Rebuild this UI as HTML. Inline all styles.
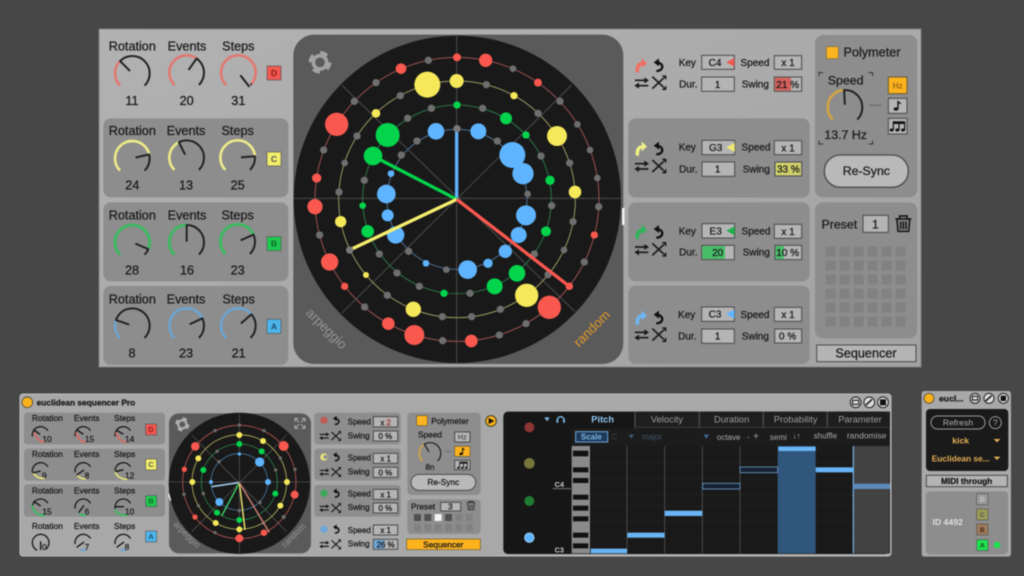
<!DOCTYPE html>
<html><head><meta charset="utf-8"><style>
html,body{margin:0;padding:0;background:#474747;width:1024px;height:576px;overflow:hidden}
svg{display:block;filter:blur(.45px)}
text{font-family:"Liberation Sans",sans-serif;fill:#1c1c1c;text-anchor:middle}
text:not([style]):not([stroke]){stroke:#1c1c1c;stroke-width:.8}
.b{stroke:#4a4a4a;stroke-width:3;fill:#b4b4b4}
.l{text-anchor:start}
.g{fill:#6e6e6e}
.r{fill:#f9584f}.y{fill:#f5e95a}.n{fill:#04d44c}.u{fill:#5fb4ff}
</style></head><body>
<svg width="1024" height="576" viewBox="0 0 1024 576" xmlns="http://www.w3.org/2000/svg">
<defs>
<linearGradient id="pg" x1="0" y1="0" x2="1" y2="1"><stop offset="0" stop-color="#b2b2b2"/><stop offset="1" stop-color="#a2a2a2"/></linearGradient>
<circle id="k" r="52" fill="none" stroke="#222" stroke-width="6" pathLength="360" stroke-dasharray="270 90" transform="rotate(135)"/>
<circle id="ks" r="25" fill="none" stroke="#1c1c1c" stroke-width="4" pathLength="360" stroke-dasharray="160 200" transform="rotate(170)"/>
<g id="back" fill="none" stroke="#111"><path d="M-8 18C14 18 16-4 -4-8" stroke-width="7"/><path d="M-16-8L0-20V4Z" fill="#111" stroke="none"/></g>
<g id="swap" fill="none" stroke="#1a1a1a" stroke-width="5"><path d="M-20-7H12M20 9H-12"/><path d="M8-16L22-7L8 2ZM-8 0L-22 9L-8 18Z" fill="#1a1a1a" stroke="none"/></g>
<g id="shuf" fill="none" stroke="#1a1a1a" stroke-width="5"><path d="M-20-18L14 14M-20 18L14-14"/><path d="M8-22L22-22L22-8ZM8 22L22 22L22 8Z" fill="#1a1a1a" stroke="none"/></g>
<g id="gear" fill="none"><circle r="20" stroke-width="11"/><circle r="29" stroke-width="10" pathLength="64" stroke-dasharray="8 8"/></g>
<g id="note1"><ellipse cx="-5" cy="10" rx="7" ry="5" fill="#111"/><path d="M1 10V-12L9-6" fill="none" stroke="#111" stroke-width="4"/></g>
<g id="note3"><ellipse cx="-17" cy="12" rx="6" ry="4.5" fill="#111"/><ellipse cx="0" cy="12" rx="6" ry="4.5" fill="#111"/><ellipse cx="17" cy="12" rx="6" ry="4.5" fill="#111"/><path d="M-12 12V-12H22V12M5 12V-12" fill="none" stroke="#111" stroke-width="3.5"/><path d="M-12-14H22V-6H-12Z" fill="#111"/></g>
</defs>

<!-- MAIN DEVICE -->
<rect x="99" y="29" width="822" height="338" fill="url(#pg)"/>
<rect x="99" y="29" width="822" height="338" fill="none" stroke="#7e7e7e" stroke-width="1"/>

<g transform="translate(95 25) scale(.33333)">
<rect x="25" y="280" width="555" height="237" rx="22" fill="#8d8d8d"/>
<rect x="25" y="532" width="555" height="237" rx="22" fill="#8d8d8d"/>
<rect x="25" y="783" width="555" height="237" rx="22" fill="#8d8d8d"/>
<g font-size="38">
<text x="112" y="76">Rotation</text><text x="276" y="76">Events</text><text x="430" y="76">Steps</text>
<text x="111" y="240">11</text><text x="275" y="240">20</text><text x="430" y="240">31</text>
<text x="112" y="330">Rotation</text><text x="273" y="330">Events</text><text x="428" y="330">Steps</text>
<text x="112" y="494">24</text><text x="273" y="494">13</text><text x="428" y="494">25</text>
<text x="112" y="584">Rotation</text><text x="276" y="584">Events</text><text x="428" y="584">Steps</text>
<text x="111" y="748">28</text><text x="276" y="748">16</text><text x="428" y="748">23</text>
<text x="112" y="835">Rotation</text><text x="273" y="835">Events</text><text x="431" y="835">Steps</text>
<text x="111" y="998">8</text><text x="273" y="998">23</text><text x="431" y="998">21</text>
</g>
<g fill="none" stroke-width="8">
<g transform="translate(112 145)"><use href="#k"/><circle r="52" stroke="#e07a72" pathLength="360" stroke-dasharray="90 360" transform="rotate(135)"/><path d="M0-10V-54" stroke="#222" stroke-width="6" transform="rotate(-45)"/></g>
<g transform="translate(275 143)"><use href="#k"/><circle r="52" stroke="#e07a72" pathLength="360" stroke-dasharray="170 360" transform="rotate(135)"/><path d="M0-10V-54" stroke="#222" stroke-width="6" transform="rotate(35)"/></g>
<g transform="translate(430 143)"><use href="#k"/><circle r="52" stroke="#e07a72" pathLength="360" stroke-dasharray="265 360" transform="rotate(135)"/><path d="M0-10V-54" stroke="#222" stroke-width="6" transform="rotate(142)"/></g>
<g transform="translate(112 400)"><use href="#k"/><circle r="52" stroke="#ecea8a" pathLength="360" stroke-dasharray="212 360" transform="rotate(135)"/><path d="M0-10V-54" stroke="#222" stroke-width="6" transform="rotate(77)"/></g>
<g transform="translate(275 398)"><use href="#k"/><circle r="52" stroke="#ecea8a" pathLength="360" stroke-dasharray="108 360" transform="rotate(135)"/><path d="M0-10V-54" stroke="#222" stroke-width="6" transform="rotate(-27)"/></g>
<g transform="translate(428 398)"><use href="#k"/><circle r="52" stroke="#ecea8a" pathLength="360" stroke-dasharray="220 360" transform="rotate(135)"/><path d="M0-10V-54" stroke="#222" stroke-width="6" transform="rotate(85)"/></g>
<g transform="translate(112 652)"><use href="#k"/><circle r="52" stroke="#3fb862" pathLength="360" stroke-width="9" stroke-dasharray="248 360" transform="rotate(135)"/><path d="M0-10V-54" stroke="#222" stroke-width="6" transform="rotate(113)"/></g>
<g transform="translate(275 652)"><use href="#k"/><circle r="52" stroke="#3fb862" pathLength="360" stroke-width="9" stroke-dasharray="135 360" transform="rotate(135)"/><path d="M0-2V-54" stroke="#222" stroke-width="6"/></g>
<g transform="translate(428 650)"><use href="#k"/><circle r="52" stroke="#3fb862" pathLength="360" stroke-width="9" stroke-dasharray="201 360" transform="rotate(135)"/><path d="M0-10V-54" stroke="#222" stroke-width="6" transform="rotate(66)"/></g>
<g transform="translate(112 902)"><use href="#k"/><circle r="52" stroke="#6da4d0" pathLength="360" stroke-dasharray="64 360" transform="rotate(135)"/><path d="M0-10V-54" stroke="#222" stroke-width="6" transform="rotate(-71)"/></g>
<g transform="translate(275 902)"><use href="#k"/><circle r="52" stroke="#6da4d0" pathLength="360" stroke-dasharray="200 360" transform="rotate(135)"/><path d="M0-10V-54" stroke="#222" stroke-width="6" transform="rotate(65)"/></g>
<g transform="translate(430 902)"><use href="#k"/><circle r="52" stroke="#6da4d0" pathLength="360" stroke-dasharray="184 360" transform="rotate(135)"/><path d="M0-10V-54" stroke="#222" stroke-width="6" transform="rotate(49)"/></g>
</g>
<g font-size="26" font-weight="bold" stroke="#555" stroke-width="2">
<rect x="516" y="123" width="42" height="42" fill="#f0584f"/><text x="537" y="153" stroke="none" fill="#8c1f1a" style="fill:#8c1f1a">D</text>
<rect x="516" y="381" width="42" height="42" fill="#f2ee6a"/><text x="537" y="411" stroke="none" style="fill:#555">C</text>
<rect x="516" y="635" width="42" height="42" fill="#1ec94f"/><text x="537" y="665" stroke="none" style="fill:#0e6a28">B</text>
<rect x="516" y="883" width="42" height="42" fill="#4cb5ec"/><text x="537" y="913" stroke="none" style="fill:#1d5070">A</text>
</g>
</g>

<!-- MAIN SEQ CIRCLE -->
<g transform="translate(290 30) scale(.33333)">
<rect x="10" y="14" width="990" height="988" rx="62" fill="#5a5a5a"/>
<circle cx="502" cy="508" r="491" fill="#191919"/>
<g stroke="#4c4c4c" stroke-width="3">
<path d="M10 505H994M500 16V998M155 165L855 845M845 165L155 850"/>
</g>
<g fill="none" stroke-width="3">
<circle cx="501" cy="508" r="426" stroke="#99524f"/>
<circle cx="501" cy="508" r="355" stroke="#9a9862"/>
<circle cx="501" cy="508" r="283" stroke="#2b7546"/>
<circle cx="501" cy="508" r="210" stroke="#4e6f90"/>
</g>
<g class="r">
<circle cx="501" cy="82" r="12"/><circle cx="587" cy="91" r="20"/><circle cx="744" cy="158" r="12"/><circle cx="913" cy="615" r="11"/><circle cx="838" cy="769" r="11"/><circle cx="778" cy="832" r="35"/><circle cx="544" cy="933" r="19"/><circle cx="373" cy="915" r="30"/><circle cx="295" cy="881" r="19"/><circle cx="164" cy="769" r="11"/><circle cx="119" cy="696" r="26"/><circle cx="75" cy="530" r="23"/><circle cx="80" cy="444" r="14"/><circle cx="140" cy="283" r="35"/><circle cx="333" cy="116" r="16"/>
</g>
<g class="g">
<circle cx="669" cy="116" r="10"/><circle cx="810" cy="214" r="11"/><circle cx="862" cy="283" r="10"/><circle cx="900" cy="360" r="10"/><circle cx="922" cy="444" r="10"/><circle cx="926" cy="530" r="11"/><circle cx="883" cy="696" r="11"/><circle cx="708" cy="881" r="11"/><circle cx="628" cy="915" r="11"/><circle cx="458" cy="932" r="11"/><circle cx="224" cy="831" r="11"/><circle cx="89" cy="615" r="11"/><circle cx="101" cy="360" r="11"/><circle cx="193" cy="214" r="11"/><circle cx="258" cy="158" r="11"/><circle cx="415" cy="91" r="11"/>
<circle cx="589" cy="164" r="11"/><circle cx="744" cy="250" r="11"/><circle cx="839" cy="399" r="11"/><circle cx="849" cy="575" r="11"/><circle cx="822" cy="660" r="10"/><circle cx="774" cy="734" r="11"/><circle cx="631" cy="838" r="11"/><circle cx="545" cy="860" r="11"/><circle cx="457" cy="860" r="11"/><circle cx="292" cy="796" r="11"/><circle cx="147" cy="486" r="11"/><circle cx="164" cy="399" r="10"/><circle cx="201" cy="318" r="11"/><circle cx="331" cy="197" r="11"/>
<circle cx="578" cy="235" r="11"/><circle cx="753" cy="378" r="11"/><circle cx="785" cy="527" r="11"/><circle cx="733" cy="672" r="11"/><circle cx="540" cy="790" r="11"/><circle cx="388" cy="769" r="11"/><circle cx="321" cy="729" r="11"/><circle cx="268" cy="672" r="11"/><circle cx="223" cy="451" r="11"/><circle cx="353" cy="265" r="11"/><circle cx="424" cy="235" r="11"/>
<circle cx="622" cy="333" r="11"/><circle cx="713" cy="492" r="10"/><circle cx="469" cy="719" r="10"/><circle cx="356" cy="664" r="11"/><circle cx="334" cy="375" r="11"/><circle cx="381" cy="333" r="11"/>
</g>
<g class="y">
<circle cx="500" cy="153" r="21"/><circle cx="672" cy="197" r="11"/><circle cx="801" cy="318" r="30"/><circle cx="855" cy="486" r="19"/><circle cx="710" cy="796" r="35"/><circle cx="370" cy="838" r="23"/><circle cx="228" cy="735" r="9"/><circle cx="152" cy="575" r="17"/><circle cx="258" cy="250" r="13"/><circle cx="412" cy="164" r="39"/>
</g>
<g class="n">
<circle cx="501" cy="225" r="11"/><circle cx="648" cy="265" r="18"/><circle cx="708" cy="315" r="11"/><circle cx="780" cy="451" r="14"/><circle cx="768" cy="604" r="15"/><circle cx="681" cy="730" r="25"/><circle cx="614" cy="769" r="24"/><circle cx="462" cy="790" r="11"/><circle cx="233" cy="604" r="19"/><circle cx="218" cy="527" r="10"/><circle cx="249" cy="378" r="28"/><circle cx="293" cy="315" r="36"/>
</g>
<g class="u">
<circle cx="565" cy="304" r="24"/><circle cx="667" cy="375" r="39"/><circle cx="699" cy="431" r="32"/><circle cx="708" cy="556" r="30"/><circle cx="686" cy="615" r="24"/><circle cx="646" cy="664" r="20"/><circle cx="594" cy="700" r="14"/><circle cx="533" cy="719" r="28"/><circle cx="408" cy="700" r="10"/><circle cx="317" cy="615" r="26"/><circle cx="293" cy="556" r="18"/><circle cx="289" cy="492" r="28"/><circle cx="303" cy="431" r="10"/><circle cx="438" cy="304" r="25"/>
</g>
<g stroke-width="10">
<path d="M500 508V300" stroke="#5fb4ff"/>
<path d="M500 508L249 378" stroke="#04d44c"/>
<path d="M500 508L179 660" stroke="#f5ee6e"/>
<path d="M500 508L838 769" stroke="#f9584f"/>
</g>
<circle cx="501" cy="296" r="11" fill="#7a7a7a"/><circle cx="179" cy="660" r="11" fill="#7a7a7a"/>
<circle cx="838" cy="769" r="11" fill="#f9584f"/>
<use href="#gear" x="90" y="97" stroke="#a2a2a2"/>
<text font-size="40" transform="translate(100 905) rotate(45)" style="fill:#949494">arpeggio</text>
<text font-size="40" transform="translate(915 905) rotate(-45)" style="fill:#e0992a">random</text>
</g>
<rect x="622" y="208" width="2.5" height="17" fill="#f2f2f2"/>

<!-- MAIN RIGHT -->
<g transform="translate(625 30) scale(.33333)">
<rect x="10" y="265" width="544" height="238" rx="22" fill="#8d8d8d"/>
<rect x="10" y="517" width="544" height="237" rx="22" fill="#8d8d8d"/>
<rect x="10" y="767" width="544" height="235" rx="22" fill="#8d8d8d"/>
<rect x="570" y="15" width="307" height="487" rx="24" fill="#8d8d8d"/>
<rect x="570" y="517" width="307" height="408" rx="24" fill="#8d8d8d"/>

<!-- rows -->
<g>
<g font-size="30">
<rect class="b" x="230" y="76" width="98" height="42"/><text x="270" y="108">C4</text><path d="M328 84L304 97L328 110Z" fill="#f0584f"/>
<rect class="b" x="448" y="77" width="82" height="41"/><text x="489" y="108">x 1</text>
<rect class="b" x="230" y="141" width="98" height="43"/><text x="278" y="174">1</text>
<rect class="b" x="448" y="141" width="82" height="43"/><rect x="450" y="143" width="48" height="39" fill="#d4605c"/><text x="488" y="174">21 %</text>
<text x="187" y="108">Key</text><text x="390" y="108">Speed</text><text x="190" y="173">Dur.</text><text x="391" y="173">Swing</text>
</g>
<use href="#back" transform="translate(102 105)"/><use href="#swap" transform="translate(50 158)"/><use href="#shuf" transform="translate(102 158)"/>
<path d="M32 126C30 104 40 96 50 96L50 84L66 100L50 114L50 106C44 106 42 116 42 128Z" fill="#ef6f65"/>
</g>
<g>
<g font-size="30">
<rect class="b" x="231" y="331" width="98" height="43"/><text x="272" y="363">G3</text><path d="M329 339L304 352L329 366Z" fill="#f0ea70"/>
<rect class="b" x="448" y="332" width="82" height="42"/><text x="489" y="364">x 1</text>
<rect class="b" x="231" y="396" width="98" height="43"/><text x="278" y="428">1</text>
<rect class="b" x="450" y="396" width="80" height="42"/><rect x="452" y="398" width="76" height="38" fill="#cfcf6a"/><text x="490" y="428">33 %</text>
<text x="187" y="362">Key</text><text x="393" y="362">Speed</text><text x="190" y="427">Dur.</text><text x="394" y="427">Swing</text>
</g>
<use href="#back" transform="translate(102 355)"/><use href="#swap" transform="translate(50 408)"/><use href="#shuf" transform="translate(102 408)"/>
<path d="M32 376C30 354 40 346 50 346L50 334L66 350L50 364L50 356C44 356 42 366 42 378Z" fill="#eeee88"/>
</g>
<g>
<g font-size="30">
<rect class="b" x="231" y="581" width="98" height="43"/><text x="272" y="613">E3</text><path d="M329 589L304 602L329 616Z" fill="#1fb04c"/>
<rect class="b" x="448" y="583" width="82" height="42"/><text x="489" y="615">x 1</text>
<rect class="b" x="230" y="646" width="98" height="43"/><rect x="232" y="648" width="68" height="39" fill="#47bd68"/><text x="278" y="678">20</text>
<rect class="b" x="450" y="646" width="80" height="43"/><rect x="452" y="648" width="24" height="39" fill="#47bd68"/><text x="488" y="678">10 %</text>
<text x="187" y="613">Key</text><text x="393" y="613">Speed</text><text x="190" y="677">Dur.</text><text x="394" y="677">Swing</text>
</g>
<use href="#back" transform="translate(102 605)"/><use href="#swap" transform="translate(50 658)"/><use href="#shuf" transform="translate(102 658)"/>
<path d="M32 626C30 604 40 596 50 596L50 584L66 600L50 614L50 606C44 606 42 616 42 628Z" fill="#2fb45a"/>
</g>
<g>
<g font-size="30">
<rect class="b" x="230" y="831" width="98" height="43"/><text x="270" y="863">C3</text><path d="M328 839L303 852L328 866Z" fill="#5fb4ff"/>
<rect class="b" x="448" y="832" width="82" height="42"/><text x="489" y="864">x 1</text>
<rect class="b" x="230" y="897" width="98" height="43"/><text x="278" y="929">1</text>
<rect class="b" x="449" y="897" width="81" height="42"/><text x="488" y="928">0 %</text>
<text x="185" y="864">Key</text><text x="390" y="864">Speed</text><text x="187" y="928">Dur.</text><text x="391" y="928">Swing</text>
</g>
<use href="#back" transform="translate(102 862)"/><use href="#swap" transform="translate(50 914)"/><use href="#shuf" transform="translate(102 914)"/>
<path d="M32 883C30 861 40 853 50 853L50 841L66 857L50 871L50 863C44 863 42 873 42 885Z" fill="#6eb6f2"/>
</g>

<!-- polymeter -->
<rect x="604" y="50" width="36" height="36" fill="#fbb420" stroke="#7a6a3a" stroke-width="2"/>
<text x="741" y="80" font-size="38">Polymeter</text>
<text x="662" y="164" font-size="37">Speed</text>
<text x="662" y="327" font-size="37">13.7 Hz</text>
<path d="M582 138V128H594M731 128H743V138M582 332V342H594M731 342H743V332" fill="none" stroke="#333" stroke-width="3"/>
<g transform="translate(660 232)" fill="none" stroke-width="8"><use href="#k"/><circle r="52" stroke="#d2a544" pathLength="360" stroke-dasharray="130 360" transform="rotate(135)"/><path d="M0-8V-54" stroke="#222" stroke-width="6" transform="rotate(-3)"/></g>
<path d="M732 226H770" stroke="#6e6e6e" stroke-width="4"/>
<rect x="790" y="141" width="56" height="50" fill="#fdb31e" stroke="#6a5a30" stroke-width="3"/><text x="818" y="176" font-size="25" font-weight="bold" style="fill:#9a6a14">Hz</text>
<rect x="790" y="205" width="56" height="45" class="b"/><use href="#note1" transform="translate(818 227)"/>
<rect x="790" y="265" width="56" height="47" class="b"/><use href="#note3" transform="translate(817 288)"/>
<rect x="598" y="375" width="252" height="97" rx="48" fill="#b9b9b9" stroke="#4a4a4a" stroke-width="4"/>
<text x="724" y="435" font-size="37">Re-Sync</text>

<!-- preset -->
<text x="643" y="596" font-size="37">Preset</text>
<rect x="714" y="556" width="76" height="51" class="b"/><text x="751" y="596" font-size="36">1</text>
<g fill="none" stroke="#1a1a1a" stroke-width="5"><path d="M811 567H859M824 566V558H846V566M816 568L819 604H851L854 568M827 574V598M835 574V598M843 574V598"/></g>
<g fill="#818181">
<rect x="602" y="650" width="30" height="30"/><rect x="644" y="650" width="30" height="30"/><rect x="686" y="650" width="30" height="30"/><rect x="728" y="650" width="30" height="30"/><rect x="770" y="650" width="30" height="30"/><rect x="812" y="650" width="30" height="30"/>
<rect x="602" y="692" width="30" height="30"/><rect x="644" y="692" width="30" height="30"/><rect x="686" y="692" width="30" height="30"/><rect x="728" y="692" width="30" height="30"/><rect x="770" y="692" width="30" height="30"/><rect x="812" y="692" width="30" height="30"/>
<rect x="602" y="734" width="30" height="30"/><rect x="644" y="734" width="30" height="30"/><rect x="686" y="734" width="30" height="30"/><rect x="728" y="734" width="30" height="30"/><rect x="770" y="734" width="30" height="30"/><rect x="812" y="734" width="30" height="30"/>
<rect x="602" y="776" width="30" height="30"/><rect x="644" y="776" width="30" height="30"/><rect x="686" y="776" width="30" height="30"/><rect x="728" y="776" width="30" height="30"/><rect x="770" y="776" width="30" height="30"/><rect x="812" y="776" width="30" height="30"/>
<rect x="602" y="818" width="30" height="30"/><rect x="644" y="818" width="30" height="30"/><rect x="686" y="818" width="30" height="30"/><rect x="728" y="818" width="30" height="30"/><rect x="770" y="818" width="30" height="30"/><rect x="812" y="818" width="30" height="30"/>
<rect x="602" y="860" width="30" height="30"/><rect x="644" y="860" width="30" height="30"/><rect x="686" y="860" width="30" height="30"/><rect x="728" y="860" width="30" height="30"/><rect x="770" y="860" width="30" height="30"/><rect x="812" y="860" width="30" height="30"/>
</g>
<rect x="575" y="945" width="298" height="50" class="b"/><text x="723" y="982" font-size="38">Sequencer</text>
</g>

<!-- BOTTOM LEFT DEVICE -->
<rect x="20" y="394" width="871" height="162" rx="3" fill="#a8a8a8" stroke="#c0c0c0" stroke-width="1"/>
<g transform="translate(15 390) scale(.33333)">
<circle cx="37" cy="37" r="16" fill="#f9b21c" stroke="#333" stroke-width="2"/>
<text class="l" x="65" y="46" font-size="25" font-weight="bold">euclidean sequencer Pro</text>
<rect x="27" y="68" width="423" height="95" rx="10" fill="#8d8d8d"/>
<rect x="27" y="176" width="423" height="96" rx="10" fill="#8d8d8d"/>
<rect x="27" y="283" width="423" height="97" rx="10" fill="#8d8d8d"/>
<g font-size="25">
<text x="97" y="93">Rotation</text><text x="215" y="93">Events</text><text x="329" y="93">Steps</text>
<text x="97" y="201">Rotation</text><text x="215" y="201">Events</text><text x="329" y="201">Steps</text>
<text x="97" y="310">Rotation</text><text x="215" y="310">Events</text><text x="329" y="310">Steps</text>
<text x="97" y="417">Rotation</text><text x="215" y="417">Events</text><text x="329" y="417">Steps</text>
<text x="96" y="156">10</text><text x="224" y="156">15</text><text x="344" y="156">14</text>
<text x="88" y="266">9</text><text x="216" y="266">8</text><text x="344" y="266">12</text>
<text x="96" y="374">15</text><text x="216" y="374">6</text><text x="344" y="374">10</text>
<text x="88" y="480">0</text><text x="216" y="480">7</text><text x="336" y="480">8</text>
</g>
<g fill="none" stroke-width="4">
<g transform="translate(77 135)"><use href="#ks"/><path d="M15 18C5 22-12 14-20 -6" stroke="#d0706a" stroke-width="6" transform="rotate(10)" /><path d="M-2 -2L-22-16" stroke="#111"/></g>
<g transform="translate(205 135)"><use href="#ks"/><path d="M8 22C-5 22-15 12-22 -8" stroke="#d0706a" stroke-width="6"/><path d="M0-2L-20-16" stroke="#111"/></g>
<g transform="translate(325 135)"><use href="#ks"/><path d="M10 22C-5 22-15 12-22 -8" stroke="#d0706a" stroke-width="6"/><path d="M0-2L-20-14" stroke="#111"/></g>
<g transform="translate(77 243)"><use href="#ks"/><path d="M12 22C0 24-15 18-24 4" stroke="#e8e47a" stroke-width="5"/><path d="M0 0L-24 6" stroke="#111"/></g>
<g transform="translate(205 243)"><use href="#ks"/><path d="M8 24C-3 24-12 20-18 14" stroke="#e8e47a" stroke-width="5"/><path d="M2-3L-20 12" stroke="#111"/></g>
<g transform="translate(325 243)"><use href="#ks"/><path d="M12 24C0 26-20 20-25 0" stroke="#e8e47a" stroke-width="5"/><path d="M0-4L-24 2" stroke="#111"/></g>
<g transform="translate(77 352)"><use href="#ks"/><path d="M12 24C0 26-20 20-26 -6" stroke="#3fb862" stroke-width="6"/><path d="M0-4L-22-18" stroke="#111"/></g>
<g transform="translate(205 352)"><use href="#ks"/><path d="M8 24C0 24-8 22-12 20" stroke="#3fb862" stroke-width="6"/><path d="M2-6L-14 16" stroke="#111"/></g>
<g transform="translate(325 352)"><use href="#ks"/><path d="M12 24C0 26-20 20-25 6" stroke="#3fb862" stroke-width="6"/><path d="M2-2L-24-2" stroke="#111"/></g>
<g transform="translate(77 458)"><circle r="25" stroke="#1c1c1c" stroke-width="4" pathLength="360" stroke-dasharray="300 60" transform="rotate(115)"/><path d="M0-4V22" stroke="#111"/></g>
<g transform="translate(205 458)"><use href="#ks"/><path d="M8 24C2 24-4 22-8 20" stroke="#6da4d0" stroke-width="6"/><path d="M2-2L-20 14" stroke="#111"/></g>
<g transform="translate(325 458)"><use href="#ks"/><path d="M8 24C2 24-4 22-8 20" stroke="#6da4d0" stroke-width="6"/><path d="M2-2L-20 14" stroke="#111"/></g>
</g>
<g font-size="22" font-weight="bold" stroke="#555" stroke-width="2">
<rect x="392" y="102" width="33" height="33" fill="#f0584f"/><text x="408" y="126" stroke="none" style="fill:#8c1f1a">D</text>
<rect x="392" y="207" width="33" height="33" fill="#f2ee6a"/><text x="408" y="231" stroke="none" style="fill:#555">C</text>
<rect x="392" y="317" width="33" height="33" fill="#1ec94f"/><text x="408" y="341" stroke="none" style="fill:#0e6a28">B</text>
<rect x="392" y="423" width="33" height="33" fill="#4cb5ec"/><text x="408" y="447" stroke="none" style="fill:#1d5070">A</text>
</g>
<!-- small circle -->
<rect x="462" y="70" width="426" height="420" rx="30" fill="#5a5a5a"/>
<circle cx="673" cy="280" r="212" fill="#191919"/>
<path d="M462 276H885M673 70V490M530 135L815 425M815 135L530 425" stroke="#4e4e4e" stroke-width="2.5"/>
<g fill="none" stroke-width="2.5">
<circle cx="673" cy="276" r="170" stroke="#b5544f"/>
<circle cx="673" cy="276" r="142" stroke="#b8b45c"/>
<circle cx="673" cy="276" r="114" stroke="#2b8c4c"/>
<circle cx="673" cy="276" r="85" stroke="#47779f"/>
</g>
<g class="g">
<circle cx="673" cy="105" r="5"/><circle cx="747" cy="122" r="5"/><circle cx="840" cy="238" r="5"/><circle cx="806" cy="381" r="6"/><circle cx="600" cy="428" r="5"/><circle cx="507" cy="313" r="5"/><circle cx="600" cy="122" r="5"/><circle cx="796" cy="204" r="5"/><circle cx="745" cy="399" r="5"/><circle cx="550" cy="347" r="5"/><circle cx="606" cy="184" r="5"/><circle cx="782" cy="240" r="5"/><circle cx="735" cy="337" r="5"/><circle cx="673" cy="362" r="5"/><circle cx="565" cy="311" r="5"/><circle cx="612" cy="215" r="5"/>
</g>
<g class="r"><circle cx="806" cy="168" r="15"/><circle cx="839" cy="314" r="12"/><circle cx="747" cy="428" r="10"/><circle cx="673" cy="445" r="12"/><circle cx="540" cy="381" r="8"/><circle cx="508" cy="238" r="8"/><circle cx="541" cy="169" r="13"/></g>
<g class="y"><circle cx="673" cy="135" r="9"/><circle cx="744" cy="153" r="9"/><circle cx="816" cy="276" r="9"/><circle cx="796" cy="347" r="9"/><circle cx="673" cy="418" r="9"/><circle cx="602" cy="399" r="9"/><circle cx="532" cy="276" r="9"/><circle cx="550" cy="205" r="9"/></g>
<g class="n"><circle cx="673" cy="162" r="9"/><circle cx="740" cy="184" r="9"/><circle cx="781" cy="311" r="9"/><circle cx="673" cy="390" r="9"/><circle cx="606" cy="368" r="9"/><circle cx="565" cy="240" r="9"/></g>
<g class="u"><circle cx="673" cy="192" r="5"/><circle cx="734" cy="216" r="14"/><circle cx="759" cy="276" r="9"/><circle cx="613" cy="336" r="12"/><circle cx="588" cy="276" r="6"/></g>
<g stroke-width="4.5">
<path d="M673 278L590 290" stroke="#a8d4f8"/>
<path d="M673 278L620 378" stroke="#3ec864"/>
<path d="M673 278L690 420" stroke="#e8e06a"/>
<path d="M673 278L763 427" stroke="#c87c70"/>
</g>
<g transform="translate(502 103) scale(.62)"><use href="#gear" stroke="#b0b0b0"/></g>
<path d="M840 85L852 97M840 85V95M840 85H850M870 85L858 97M870 85V95M870 85H860M840 115L852 103M840 115V105M840 115H850M870 115L858 103M870 115V105M870 115H860" fill="none" stroke="#b0b0b0" stroke-width="3"/>
<text font-size="26" transform="translate(510 440) rotate(45)" style="fill:#949494">arpeggio</text>
<text font-size="26" transform="translate(842 442) rotate(-45)" style="fill:#949494">random</text>
<path d="M461 312L467 332" stroke="#eee" stroke-width="4"/>
</g>

<!-- BOTTOM MIDDLE -->
<g transform="translate(310 390) scale(.33333)">
<rect x="13" y="68" width="259" height="95" rx="10" fill="#8d8d8d"/>
<rect x="13" y="176" width="259" height="95" rx="10" fill="#8d8d8d"/>
<rect x="13" y="285" width="259" height="95" rx="10" fill="#8d8d8d"/>
<rect x="292" y="68" width="220" height="247" rx="12" fill="#8d8d8d"/>
<rect x="292" y="328" width="220" height="104" rx="12" fill="#8d8d8d"/>
<g font-size="24">
<text x="148" y="103">Speed</text><text x="146" y="145">Swing</text>
<text x="148" y="212">Speed</text><text x="146" y="253">Swing</text>
<text x="148" y="320">Speed</text><text x="146" y="360">Swing</text>
<text x="148" y="429">Speed</text><text x="146" y="470">Swing</text>
<rect class="b" x="190" y="80" width="73" height="31"/><text x="227" y="106">x 2</text>
<rect x="228" y="84" width="14" height="24" fill="#d88a84" opacity=".5"/>
<rect class="b" x="190" y="123" width="73" height="30"/><text x="226" y="147">0 %</text>
<rect class="b" x="190" y="190" width="73" height="30"/><text x="227" y="214">x 1</text>
<rect class="b" x="190" y="232" width="73" height="30"/><text x="226" y="256">0 %</text>
<rect class="b" x="190" y="298" width="73" height="30"/><text x="227" y="322">x 1</text>
<rect class="b" x="190" y="339" width="73" height="30"/><text x="226" y="363">0 %</text>
<rect class="b" x="190" y="405" width="73" height="30"/><text x="227" y="429">x 1</text>
<rect class="b" x="190" y="448" width="73" height="30"/><rect x="192" y="450" width="32" height="26" fill="#6ea7d8"/><text x="227" y="472">26 %</text>
</g>
<use href="#back" transform="translate(80 91) scale(.68)"/><use href="#swap" transform="translate(43 138) scale(.68)"/><use href="#shuf" transform="translate(78 138) scale(.68)"/>
<use href="#back" transform="translate(80 200) scale(.68)"/><use href="#swap" transform="translate(43 246) scale(.68)"/><use href="#shuf" transform="translate(78 246) scale(.68)"/>
<use href="#back" transform="translate(80 309) scale(.68)"/><use href="#swap" transform="translate(43 354) scale(.68)"/><use href="#shuf" transform="translate(78 354) scale(.68)"/>
<use href="#back" transform="translate(80 417) scale(.68)"/><use href="#swap" transform="translate(43 463) scale(.68)"/><use href="#shuf" transform="translate(78 463) scale(.68)"/>
<circle cx="42" cy="91" r="11" fill="#c05c58"/><circle cx="42" cy="201" r="11" fill="#e8e47a"/><circle cx="42" cy="310" r="11" fill="#3ea75c"/><circle cx="42" cy="418" r="11" fill="#6ea7d8"/>
<circle cx="46" cy="201" r="6" fill="#8d8d8d"/>
<rect x="320" y="77" width="32" height="30" fill="#fbb420" stroke="#6a5a30" stroke-width="2"/>
<text x="420" y="102" font-size="25">Polymeter</text>
<text x="360" y="143" font-size="25">Speed</text>
<text x="360" y="240" font-size="24">8n</text>
<g transform="translate(360 190) scale(.62)" fill="none" stroke-width="8"><use href="#k"/><circle r="52" stroke="#d2a544" pathLength="360" stroke-dasharray="100 360" transform="rotate(135)"/><path d="M0-8V-54" stroke="#222" stroke-width="6" transform="rotate(-32)"/></g>
<path d="M404 184H424" stroke="#6e6e6e" stroke-width="3"/>
<rect class="b" x="434" y="126" width="46" height="30"/><text x="457" y="149" font-size="22" style="fill:#333">Hz</text>
<rect x="434" y="169" width="46" height="30" fill="#fdb31e" stroke="#6a5a30" stroke-width="2"/><use href="#note1" transform="translate(457 184) scale(.75)"/>
<rect class="b" x="434" y="211" width="46" height="28"/><use href="#note3" transform="translate(457 225) scale(.68)"/>
<rect x="303" y="253" width="194" height="48" rx="24" fill="#b9b9b9" stroke="#4a4a4a" stroke-width="3"/>
<text x="400" y="285" font-size="25">Re-Sync</text>
<text x="339" y="358" font-size="25">Preset</text>
<rect class="b" x="392" y="337" width="60" height="26"/><text x="421" y="359" font-size="24">3</text>
<path d="M470 338H496M477 338V334H489V338M473 340L475 359H491L493 340M480 344V355M486 344V355" fill="none" stroke="#333" stroke-width="3"/>
<rect x="312" y="372" width="21" height="21" fill="#505050"/><rect x="343" y="372" width="21" height="21" fill="#505050"/><rect x="374" y="372" width="21" height="21" fill="#f2f2f2"/><rect x="405" y="372" width="21" height="21" fill="#505050"/>
<g fill="#818181"><rect x="436" y="372" width="21" height="21"/><rect x="467" y="372" width="21" height="21"/><rect x="312" y="402" width="21" height="21"/><rect x="343" y="402" width="21" height="21"/><rect x="374" y="402" width="21" height="21"/><rect x="405" y="402" width="21" height="21"/><rect x="436" y="402" width="21" height="21"/><rect x="467" y="402" width="21" height="21"/></g>
<rect x="290" y="447" width="221" height="32" fill="#fdb31e" stroke="#6a5a30" stroke-width="2"/>
<text x="400" y="472" font-size="25">Sequencer</text>
<circle cx="543" cy="93" r="16" fill="#f9b21c" stroke="#4a3f1f" stroke-width="3"/><path d="M536 84L553 93L536 102Z" fill="#111"/>
</g>

<!-- SEQUENCER -->
<g transform="translate(500 390) scale(.33333)">
<circle cx="1067" cy="37" r="16" fill="#ccc" stroke="#222" stroke-width="3"/><rect x="1058" y="31" width="18" height="12" fill="#ddd" stroke="#111" stroke-width="3"/>
<circle cx="1108" cy="37" r="16" fill="#ddd" stroke="#222" stroke-width="3"/><path d="M1098 45L1116 28" stroke="#222" stroke-width="5"/>
<circle cx="1149" cy="37" r="16" fill="#ddd" stroke="#222" stroke-width="3"/><rect x="1140" y="28" width="18" height="18" fill="#111"/>
<rect x="10" y="65" width="1160" height="427" rx="14" fill="#161616"/>
<rect x="405" y="65" width="765" height="50" fill="#1e1e1e"/>
<path d="M405 65V115M598 65V115M790 65V115M982 65V115" stroke="#4e4e4e" stroke-width="4"/>
<path d="M405 112H1170" stroke="#3a3a3a" stroke-width="3"/>
<rect x="215" y="115" width="955" height="53" fill="#1c1c1c"/>
<text x="308" y="97" font-size="28" font-weight="bold" style="fill:#8fc4ee">Pitch</text>
<g font-size="28">
<text x="501" y="97" style="fill:#9c9c9c">Velocity</text><text x="695" y="97" style="fill:#9c9c9c">Duration</text><text x="887" y="97" style="fill:#9c9c9c">Probability</text><text x="1080" y="97" style="fill:#9c9c9c">Parameter</text>
</g>
<path d="M133 82H149L141 94Z" fill="#7ab5e0"/>
<path d="M172 96V90A10 10 0 0 1 192 90V96" fill="none" stroke="#7ab5e0" stroke-width="4"/><rect x="169" y="88" width="6" height="10" fill="#7ab5e0"/><rect x="189" y="88" width="6" height="10" fill="#7ab5e0"/>
<rect x="227" y="125" width="96" height="31" fill="#1e3a58" stroke="#6ea7d8" stroke-width="3"/>
<text x="274" y="149" font-size="24" font-weight="bold" style="fill:#7fb6e2">Scale</text>
<text x="344" y="149" font-size="24" style="fill:#444">C</text>
<path d="M386 134H402L394 146Z" fill="#3f5d78"/>
<text x="456" y="149" font-size="24" style="fill:#405468">major</text>
<path d="M611 134H627L619 146Z" fill="#3f6d98"/>
<g font-size="24">
<text x="686" y="150" style="fill:#a9a9a9">octave</text><text x="745" y="148" style="fill:#a9a9a9">-</text><text x="768" y="148" font-size="30" style="fill:#a9a9a9">+</text>
<text x="835" y="150" style="fill:#a9a9a9">semi</text><text x="890" y="146" font-weight="bold" style="fill:#a9a9a9">↓↑</text>
<text x="976" y="146" style="fill:#a9a9a9">shuffle</text><text x="1100" y="146" font-size="25.5" style="fill:#a9a9a9">randomise</text>
</g>
<!-- roll -->
<rect x="272" y="168" width="898" height="322" fill="#191919"/>
<rect x="833" y="168" width="114" height="322" fill="#31567c"/>
<rect x="1060" y="168" width="108" height="322" fill="#424242"/>
<path d="M272 184H833M947 184H1060M272 217H833M947 217H1060M272 265H833M947 265H1060M272 315H833M947 315H1060M272 348H833M947 348H1060M272 395H833M947 395H1060M272 445H833M947 445H1060" stroke="#222" stroke-width="2"/>
<path d="M381 168V490M494 168V490M607 168V490M720 168V490" stroke="#4a4a4a" stroke-width="3"/>
<path d="M1060 168V490" stroke="#6ea7d8" stroke-width="4"/>
<g fill="#68b4f5">
<rect x="272" y="476" width="109" height="14"/><rect x="382" y="428" width="112" height="15"/><rect x="494" y="362" width="113" height="16"/><rect x="835" y="170" width="112" height="13"/><rect x="947" y="232" width="113" height="15"/>
</g>
<rect x="1060" y="281" width="110" height="16" fill="#5c8ab8"/>
<rect x="608" y="280" width="112" height="17" fill="#152233" stroke="#5f88ae" stroke-width="3"/>
<rect x="720" y="231" width="113" height="17" fill="#152233" stroke="#5f88ae" stroke-width="3"/>
<!-- keys -->
<rect x="215" y="168" width="55" height="322" fill="#8a8a8a"/>
<g fill="#111"><rect x="219" y="182" width="46" height="17"/><rect x="219" y="232" width="46" height="15"/><rect x="219" y="264" width="46" height="15"/><rect x="219" y="314" width="46" height="15"/><rect x="219" y="347" width="46" height="15"/><rect x="219" y="379" width="46" height="15"/><rect x="219" y="428" width="46" height="15"/><rect x="219" y="460" width="46" height="15"/></g>
<path d="M158 296H213" stroke="#777" stroke-width="3"/>
<text x="178" y="291" font-size="22" font-weight="bold" style="fill:#ccc">C4</text>
<text x="178" y="488" font-size="22" font-weight="bold" style="fill:#ccc">C3</text>
<circle cx="88" cy="112" r="15" fill="#8a3633"/><circle cx="88" cy="220" r="16" fill="#76763c"/><circle cx="88" cy="333" r="15" fill="#1f7a33"/><circle cx="88" cy="443" r="14" fill="#5fb4ff" stroke="#9fd0f5" stroke-width="3"/>
</g>

<!-- RIGHT SMALL -->
<g transform="translate(915 385) scale(.33333)">
<rect x="20" y="18" width="268" height="497" rx="8" fill="#a8a8a8"/>
<circle cx="42" cy="40" r="15" fill="#f9b21c" stroke="#333" stroke-width="2"/>
<text class="l" x="72" y="50" font-size="26" font-weight="bold">eucl...</text>
<circle cx="180" cy="40" r="15" fill="#ccc" stroke="#222" stroke-width="3"/><rect x="172" y="34" width="16" height="11" fill="#ddd" stroke="#111" stroke-width="3"/>
<circle cx="222" cy="40" r="15" fill="#ddd" stroke="#222" stroke-width="3"/><path d="M212 48L230 32" stroke="#222" stroke-width="5"/>
<circle cx="265" cy="40" r="15" fill="#ddd" stroke="#222" stroke-width="3"/><rect x="257" y="32" width="16" height="16" fill="#111"/>
<rect x="33" y="72" width="247" height="186" rx="12" fill="#1a1a1a"/>
<rect x="48" y="93" width="162" height="39" rx="19" fill="none" stroke="#999" stroke-width="3"/>
<text x="129" y="122" font-size="26" style="fill:#b0b0b0">Refresh</text>
<circle cx="241" cy="113" r="18" fill="none" stroke="#999" stroke-width="3"/><text x="241" y="122" font-size="26" style="fill:#aaa">?</text>
<text x="137" y="175" font-size="26" font-weight="bold" style="fill:#e8b054">kick</text><path d="M236 162H256L246 172Z" fill="#e8b054"/>
<text x="137" y="229" font-size="25" font-weight="bold" style="fill:#e8b054">Euclidean se...</text><path d="M236 215H256L246 225Z" fill="#e8b054"/>
<rect x="34" y="271" width="243" height="34" class="b"/><text x="155" y="297" font-size="25" font-weight="bold">MIDI through</text>
<rect x="32" y="319" width="247" height="189" rx="12" fill="#8d8d8d"/>
<text x="98" y="420" font-size="26" font-weight="bold" style="fill:#dedede">ID 4492</text>
<g font-size="20" font-weight="bold" stroke="#555" stroke-width="2">
<rect x="185" y="326" width="34" height="33" fill="#9a9a9a"/><text x="202" y="350" stroke="none" style="fill:#ccc">D</text>
<rect x="185" y="372" width="34" height="33" fill="#9b9a55"/><text x="202" y="396" stroke="none" style="fill:#555">C</text>
<rect x="185" y="417" width="34" height="33" fill="#9b7a5a"/><text x="202" y="441" stroke="none" style="fill:#4a2a1a">B</text>
<rect x="185" y="464" width="34" height="33" fill="#1ee04d"/><text x="202" y="488" stroke="none" style="fill:#0c4a1c">A</text>
</g>
<circle cx="246" cy="480" r="10" fill="#1ee04d"/>
</g>
</svg>
</body></html>
